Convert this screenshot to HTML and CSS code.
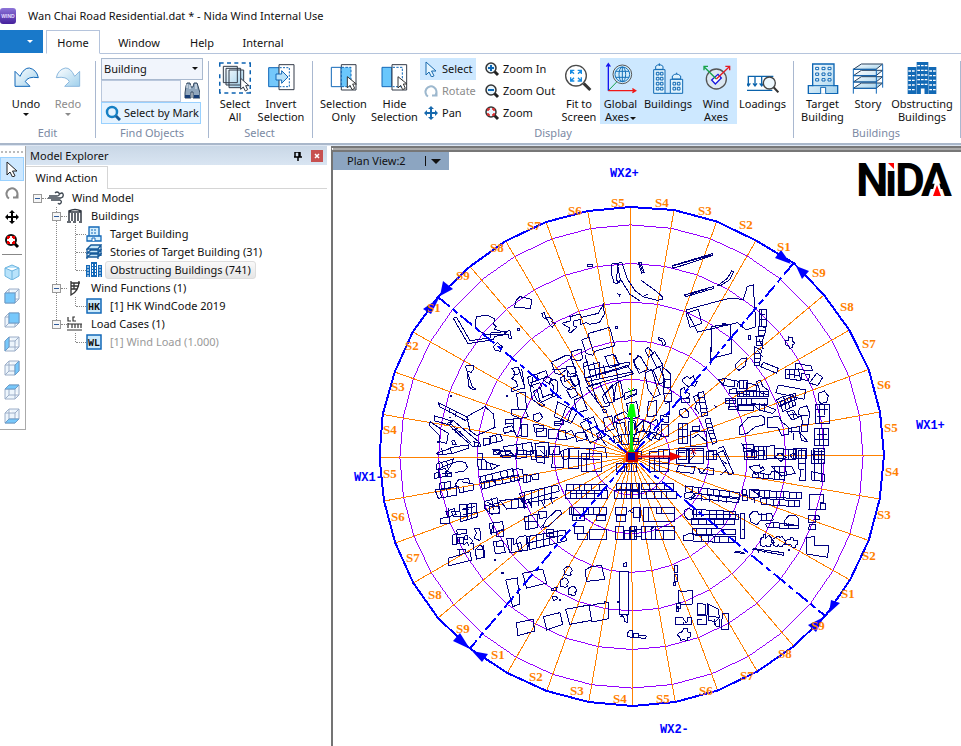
FILE: index.html
```html
<!DOCTYPE html>
<html lang="en">
<head>
<meta charset="utf-8">
<title>Nida Wind</title>
<link rel="stylesheet" href="styles.css">
</head>
<body>
<svg class="defs" aria-hidden="true">
  <defs>
    <linearGradient id="sky" x1="0" y1="0" x2="1" y2="1"><stop offset="0" stop-color="#fff"/><stop offset="1" stop-color="#9fd0ec"/></linearGradient>
    <linearGradient id="purple" x1="0" y1="0" x2="0" y2="1"><stop offset="0" stop-color="#8d74d8"/><stop offset="1" stop-color="#45209c"/></linearGradient>
    <symbol id="cursor" viewBox="0 0 16 16"><path d="M3 1v13l3-3 2.500 5 2.500-1.200-2.500-4.800h4.500z"/></symbol>
    <symbol id="rotate" viewBox="0 0 16 16"><path d="M5 13.500A5.500 5.500 0 1 1 12.500 12M9 12.500h4.500V8.500" fill="none" stroke-width="2"/></symbol>
    <symbol id="pan" viewBox="0 0 16 16"><path d="M7 4h2v3h3V5l3 3-3 3V9H9v3h2l-3 3-3-3h2V9H4v2L1 8l3-3v2h3V4H5l3-3 3 3z"/></symbol>
    <symbol id="lens" viewBox="0 0 16 16"><path d="M10 10l4 4" stroke="#222" stroke-width="3"/><circle cx="7" cy="7" r="5" fill="#e8f5fc" stroke="#333" stroke-width="1.500"/></symbol>
    <symbol id="cube" viewBox="0 0 16 16"><path class="cube-line" d="M1 5l4-4h10v10l-4 4H1zM1 5h10v10M11 5l4-4M5 1v10h10M5 11l-4 4"/></symbol>
  </defs>
</svg>

<header class="titlebar">
  <svg class="app-icon" viewBox="0 0 16 16"><rect width="16" height="16" rx="3" fill="url(#purple)"/><text x="8" y="10">WIND</text></svg>
  <h1>Wan Chai Road Residential.dat * - Nida Wind Internal Use</h1>
</header>

<nav class="tabs">
  <button class="file" aria-label="File menu"><i class="caret light"></i></button>
  <button class="tab active">Home</button>
  <button class="tab window">Window</button>
  <button class="tab help">Help</button>
  <button class="tab internal">Internal</button>
  <span class="rest"></span>
</nav>

<section class="ribbon">
  <div class="group edit">
    <div class="tools">
      <button class="big w42"><svg viewBox="32 186 96 96"><path d="M47 214v45h45l-14-14q7-17 39-12-5-24-27-29-16-1-28 25z" fill="url(#sky)" stroke="#1268b8" stroke-width="3"/></svg><span>Undo</span><i class="caret"></i></button>
      <button class="big w42 off"><svg viewBox="158 186 96 96"><path d="M241 214v45h-45l14-14q-7-17-39-12 5-24 27-29 16-1 28 25z" fill="url(#sky)" stroke="#8db9de" stroke-width="3"/></svg><span>Redo</span><i class="caret"></i></button>
    </div>
    <h2>Edit</h2>
  </div>
  <div class="group find">
    <div class="tools stack">
      <div class="combo"><select aria-label="Object type"><option>Building</option></select><i class="caret"></i></div>
      <div class="search"><input type="text" aria-label="Object number"><button aria-label="Find"><svg width="16" height="18" viewBox="0 0 16 18"><path d="M2 4l1-3h3l1 4h2l1-4h3l1 3 2 7v5H9v-6H7v6H1v-5z" fill="#91a7bd" stroke="#31465f"/><path d="M3 2v4M6 3v4M12 2v5" stroke="#eef5fb"/><path d="M1 13h5v3H1zM10 13h5v3h-5z" fill="#173d76"/></svg></button></div>
      <button class="mark"><svg width="16" height="16" viewBox="0 0 16 16"><circle cx="7" cy="7" r="5" fill="none" stroke="#1680c4" stroke-width="2.500"/><path d="M11 11l4 4" stroke="#155c99" stroke-width="3"/></svg>Select by Mark</button>
    </div>
    <h2>Find Objects</h2>
  </div>
  <div class="group choose">
    <div class="tools">
      <button class="big w46"><svg viewBox="657 183 96 96"><path d="M659 197v-11h12m10 0h12m10 0h12m10 0h12m10 0h4v12m0 10v12m0 10v12m0 10v12m0 8v4h-12m-10 0h-12m-10 0h-12m-10 0h-12m-10 0h-4v-12m0-10v-12m0-10v-12" fill="none" stroke="#0c63b3" stroke-width="5"/><g fill="url(#sky)" stroke="#333b49" stroke-width="3"><path d="M670 196h42v49h-42zM678 202h44v50h-44zM687 207h44v53h-44z"/><path fill="#fff" d="M722 232v33l8-7 6 12 7-4-6-12h10z"/></g></svg><span>Select<br>All</span></button>
      <button class="big w46"><svg viewBox="794 186 96 96"><path d="M805 203h32v57h-32z" fill="#74c8fb" stroke="#1268b8" stroke-width="3"/><path d="M836 194h45v75h-45z" fill="#fff" stroke="#333b49" stroke-width="3"/><path d="M838 203h29v57h-29" fill="none" stroke="#1268b8" stroke-width="3" stroke-dasharray="6 4"/><path d="M827 222h17v-10l19 19-19 19v-10h-17z" fill="#b8e2fa" stroke="#1268b8" stroke-width="3"/></svg><span>Invert<br>Selection</span></button>
    </div>
    <h2>Select</h2>
  </div>
  <div class="group display">
    <div class="tools">
      <button class="big w50"><svg viewBox="52 36 96 96"><path d="M62 52h29v58H62z" fill="#fff" stroke="#1268b8" stroke-width="3"/><path d="M92 44h44v76H92z" fill="#fff" stroke="#333b49" stroke-width="3"/><path d="M92 52h29v58H92z" fill="#6ac7fc" stroke="#1268b8" stroke-width="3" stroke-dasharray="8 4"/><path d="M110 80v34l8-8 6 13 8-4-6-13h11z" fill="#fff" stroke="#333" stroke-width="3"/></svg><span>Selection<br>Only</span></button>
      <button class="big w50"><svg viewBox="206 36 96 96"><path d="M215 52h29v58h-29z" fill="#6ac7fc" stroke="#1268b8" stroke-width="3"/><path d="M245 44h44v76h-44z" fill="#fff" stroke="#333b49" stroke-width="3"/><path d="M247 52h29v58h-29" fill="none" stroke="#1268b8" stroke-width="3" stroke-dasharray="7 4"/><path d="M263 80v34l8-8 6 13 8-4-6-13h11z" fill="#fff" stroke="#333" stroke-width="3"/></svg><span>Hide<br>Selection</span></button>
      <div class="minor">
        <button class="small on"><svg class="blue-cursor"><use href="#cursor"/></svg>Select</button>
        <button class="small off"><svg class="soft-rotate"><use href="#rotate"/></svg>Rotate</button>
        <button class="small"><svg class="blue-pan"><use href="#pan"/></svg>Pan</button>
      </div>
      <div class="minor zooms">
        <button class="small"><svg viewBox="0 0 16 16"><use href="#lens"/><path d="M4 7h6M7 4v6" stroke="#0b66b5" stroke-width="2"/></svg>Zoom In</button>
        <button class="small"><svg viewBox="0 0 16 16"><use href="#lens"/><path d="M4 7h6" stroke="#0b66b5" stroke-width="2"/></svg>Zoom Out</button>
        <button class="small"><svg viewBox="0 0 16 16"><use href="#lens"/><path d="M4 6V4h2m2 0h2v2m0 2v2H8m-2 0H4V8" fill="none" stroke="#d22" stroke-width="1.500"/></svg>Zoom</button>
      </div>
      <button class="big w42"><svg viewBox="761 36 96 96"><path d="M823 100l20 20" stroke="#353535" stroke-width="9"/><circle cx="800" cy="77" r="31" fill="#fff" stroke="#4a4a4a" stroke-width="4"/><path d="M794 71l-9-9m-1 10v-11h11M806 71l9-9m-10-1h11v11M794 83l-9 9m-1-10v11h11M806 83l9 9m-10 1h11V82" fill="none" stroke="#168ce4" stroke-width="4"/></svg><span>Fit to<br>Screen</span></button>
      <button class="big w41 on"><svg viewBox="882 36 96 96"><path d="M892 122l26-27" stroke="#15a34a" stroke-width="3"/><path d="M892 122V42m-6 8l6-9 6 9" fill="none" stroke="#1414f0" stroke-width="4"/><path d="M892 122h80m-8-6l10 6-10 6" fill="none" stroke="#f01818" stroke-width="4"/><circle cx="934" cy="73" r="28" fill="#d3edfc" stroke="#555" stroke-width="3"/><g fill="none" stroke="#1672b9" stroke-width="3"><circle cx="934" cy="73" r="22"/><ellipse cx="934" cy="73" rx="10" ry="22"/><path d="M934 51v44M914 64h40M914 82h40"/></g></svg><span>Global<br>Axes<i class="caret inline"></i></span></button>
      <button class="big w54 on"><svg viewBox="36 30 96 96"><g fill="#dff2fd" stroke="#1069b4" stroke-width="3"><path d="M41 124V53h34v71zM91 124V82h37v42zM47 52v-9q11-10 22 0v9zM97 81v-9q12-12 25 0v9zM58 42v-8M110 67v-5"/><path d="M49 61h8v8h-8zM61 61h8v8h-8zM49 76h8v8h-8zM61 76h8v8h-8zM49 91h8v8h-8zM61 91h8v8h-8zM49 106h8v8h-8zM61 106h8v8h-8zM99 91h8v8h-8zM112 91h8v8h-8zM99 106h8v8h-8zM112 106h8v8h-8zM75 124h16"/></g></svg><span>Buildings</span></button>
      <button class="big w42 on"><svg viewBox="180 36 96 96"><circle cx="229" cy="87" r="30" fill="#dce8f2" stroke="#555" stroke-width="4"/><path d="M215 90l19-17 10 11-18 18z" fill="#fff" stroke="#1717df" stroke-width="4"/><path d="M229 87l-37-37m0 11V49h12" fill="none" stroke="#17a34a" stroke-width="4"/><path d="M229 87l39-37m-12-1h13v12" fill="none" stroke="#e41b23" stroke-width="4"/></svg><span>Wind<br>Axes</span></button>
      <button class="big w50"><svg viewBox="318 36 96 96"><path d="M320 79h77M322 79v26m20-26v26m20-26v26M316 100l6 8 6-8m8 0l6 8 6-8m8 0l6 8 6-8M318 121h76" fill="none" stroke="#0b63ac" stroke-width="4"/><path d="M397 111l15 16" stroke="#333" stroke-width="6"/><circle cx="385" cy="99" r="18" fill="#eef8fe" stroke="#444" stroke-width="4"/></svg><span>Loadings</span></button>
    </div>
    <h2>Display</h2>
  </div>
  <div class="group built">
    <div class="tools">
      <button class="big w50"><svg viewBox="498 33 96 96"><path d="M502 128v-24h13V39h64v65h11v24z" fill="url(#sky)" stroke="#0d66b4" stroke-width="4"/><path d="M514 104h65" stroke="#0d66b4" stroke-width="3"/><path d="M524 49h9v7h-9zM543 49h9v7h-9zM561 49h9v7h-9zM524 66h9v7h-9zM543 66h9v7h-9zM561 66h9v7h-9zM524 83h9v7h-9zM543 83h9v7h-9zM561 83h9v7h-9zM539 128v-19h15v19" fill="#fff" stroke="#0d66b4" stroke-width="3"/></svg><span>Target<br>Building</span></button>
      <button class="big w40"><svg viewBox="632 33 96 96"><g fill="url(#sky)" stroke="#27405d" stroke-width="3"><path d="M636 112l24-16h64l-20 16zM636 93l24-16h64l-20 16zM636 74l24-16h64l-20 16z"/><path d="M636 55l24-16h64l-20 16z"/></g><path d="M636 53v75M705 55v73M724 40v70M636 55h69M636 74h69M636 93h69M636 112h69" stroke="#1268b8" stroke-width="3"/></svg><span>Story</span></button>
      <button class="big w68"><svg viewBox="794 33 96 96"><path fill="#1269b5" d="M826 33h35v96h-35zM799 48h26v81h-26zM862 48h23v81h-23z"/><path d="M828 44h31M828 58h31M828 72h31M828 86h31M828 100h31M801 60h22M801 74h22M801 88h22M801 102h22M801 116h22M864 60h20M864 74h20M864 88h20M864 102h20M864 116h20" stroke="#fff" stroke-width="4" stroke-dasharray="8 3"/><path d="M837 129v-18h14v18" fill="#fff" stroke="#1269b5" stroke-width="3"/></svg><span>Obstructing<br>Buildings</span></button>
    </div>
    <h2>Buildings</h2>
  </div>
</section>

<main class="workspace">
  <aside class="sidebar" aria-label="View tools">
    <span class="grip"></span>
    <button class="on" aria-label="Select"><svg class="dark-cursor"><use href="#cursor"/></svg></button>
    <button aria-label="Rotate"><svg class="gray-rotate"><use href="#rotate"/></svg></button>
    <button aria-label="Pan"><svg><use href="#pan"/></svg></button>
    <button aria-label="Zoom"><svg viewBox="0 0 16 16"><path d="M10 10l4 4" stroke="#000" stroke-width="3"/><circle cx="7" cy="7" r="5" fill="#fff" stroke="#111" stroke-width="2"/><path d="M4 6V4h2m2 0h2v2m0 2v2H8m-2 0H4V8" fill="none" stroke="#e00" stroke-width="2"/></svg></button>
    <hr>
    <button aria-label="Isometric"><svg viewBox="0 0 16 16"><path d="M8 1l7 3v8l-7 4-7-4V4zM1 4l7 3 7-3M8 7v9" fill="#b8e3fb" stroke="#6db4df"/></svg></button>
    <button aria-label="Front"><svg viewBox="0 0 16 16"><use href="#cube"/><path fill="#77c8fb" stroke="#6d9cc8" d="M1 5h10v10H1z"/></svg></button>
    <button aria-label="Back"><svg viewBox="0 0 16 16"><use href="#cube"/><path fill="#77c8fb" stroke="#6d9cc8" d="M5 1h10v10H5z"/></svg></button>
    <button aria-label="Left"><svg viewBox="0 0 16 16"><use href="#cube"/><path fill="#77c8fb" stroke="#6d9cc8" d="M1 5l4-4v10l-4 4z"/></svg></button>
    <button aria-label="Right"><svg viewBox="0 0 16 16"><use href="#cube"/><path fill="#77c8fb" stroke="#6d9cc8" d="M11 5l4-4v10l-4 4z"/></svg></button>
    <button aria-label="Top"><svg viewBox="0 0 16 16"><use href="#cube"/><path fill="#77c8fb" stroke="#6d9cc8" d="M1 5l4-4h10l-4 4z"/></svg></button>
    <button aria-label="Bottom"><svg viewBox="0 0 16 16"><use href="#cube"/><path fill="#77c8fb" stroke="#6d9cc8" d="M1 15l4-4h10l-4 4z"/></svg></button>
  </aside>

  <section class="explorer">
    <header><h2>Model Explorer</h2>
      <button class="pin" aria-label="Pin"><svg width="8" height="9" viewBox="0 0 8 9"><path d="M1 5V0h5v5M0 5h8M4 5v4M5 0v5" fill="none" stroke="#000" stroke-width="1.500"/></svg></button>
      <button class="close" aria-label="Close"><svg width="6" height="6" viewBox="0 0 6 6"><path d="M1 1l4 4M5 1L1 5" stroke="#fff" stroke-width="1.500"/></svg></button>
    </header>
    <div class="subtabs"><button>Wind Action</button><span></span></div>
    <ul class="tree">
      <li><div class="row"><i class="minus"></i><i class="stub"></i><svg viewBox="0 0 16 16"><path d="M1 6h8q3 0 2-3-2-2-4 0M0 8h13q3-1 2-4-1-2-3 0M3 10h9q2 1 1 3-2 2-3 0" fill="none" stroke="#3d4650" stroke-width="1.300"/></svg><span>Wind Model</span></div>
        <ul class="mid">
          <li><div class="row"><i class="minus"></i><i class="stub"></i><svg viewBox="0 0 16 16"><path d="M2 13V3q6-3 12 0v10M5 13V5M8 13V5M11 13V5M2 4h12M0 14h4M6 14h3m3 0h3" fill="none" stroke="#303741" stroke-width="1.500"/></svg><span>Buildings</span></div>
            <ul>
              <li><div class="row leaf"><i class="stub"></i><svg viewBox="0 0 16 16"><path d="M3 10V1h10v9M1 10h14v5H1z" fill="#d5effd" stroke="#1268b8" stroke-width="1.300"/><path d="M5 4h6M5 7h6" stroke="#1268b8" stroke-dasharray="2 1"/><path d="M6 15v-3h3v3" fill="#fff" stroke="#1268b8"/></svg><span>Target Building</span></div></li>
              <li><div class="row leaf"><i class="stub"></i><svg viewBox="0 0 16 16"><path d="M1 5l4-4h10l-3 4zM1 9l4-3h10l-3 3zM1 13l4-3h10l-3 3zM1 5v10M12 5v10M15 1v11" fill="#c7e7f8" stroke="#175b9b" stroke-width="1.300"/></svg><span>Stories of Target Building (31)</span></div></li>
              <li><div class="row leaf"><i class="stub"></i><svg viewBox="0 0 16 16"><path fill="#1268b8" d="M5 0h6v15H5zM0 3h4v12H0zM12 3h4v12h-4z"/><path d="M6.500 2v12m3-12v12M2 4v11m12-11v11" stroke="#fff" stroke-dasharray="2 1"/></svg><span class="selected">Obstructing Buildings (741)</span></div></li>
            </ul></li>
          <li><div class="row"><i class="minus"></i><i class="stub"></i><svg viewBox="0 0 16 16"><path d="M4 1v14q8-4 8-14M4 3h9M4 6h8M4 9h6M4 3h3v6" fill="none" stroke="#333" stroke-width="1.300"/></svg><span>Wind Functions (1)</span></div>
            <ul><li><div class="row leaf"><i class="stub"></i><svg viewBox="0 0 16 16"><path d="M1 1h14v14H1z" fill="#cdeafb" stroke="#1268b8" stroke-width="1.500"/><text x="8" y="12">HK</text></svg><span>[1] HK WindCode 2019</span></div></li></ul></li>
          <li><div class="row"><i class="minus"></i><i class="stub"></i><svg viewBox="0 0 16 16"><path d="M1 1v4h3M8 1H6v4h3M1 7v5m4-4v4m3-4v4m3-4v4m3-4v4M1 8h14M0 14h15" fill="none" stroke="#333" stroke-width="1.200"/></svg><span>Load Cases (1)</span></div>
            <ul><li><div class="row leaf faded"><i class="stub"></i><svg viewBox="0 0 16 16"><path d="M1 1h14v14H1z" fill="#cdeafb" stroke="#1268b8" stroke-width="1.500"/><text x="8" y="12">WL</text></svg><span>[1] Wind Load (1.000)</span></div></li></ul></li>
        </ul></li>
    </ul>
  </section>

  <section class="view">
    <button class="view-tab">Plan View:2 <b></b><i class="caret wide"></i></button>
    <svg class="plan" viewBox="333 152 628 594" preserveAspectRatio="xMidYMin meet" role="img" aria-label="Wind sectors around the target building">
      <defs><polygon id="ring" points="0,-1000 174,-985 342,-940 500,-866 643,-766 766,-643 866,-500 940,-342 985,-174 1000,0 985,174 940,342 866,500 766,643 643,766 500,866 342,940 174,985 0,1000 -174,985 -342,940 -500,866 -643,766 -766,643 -866,500 -940,342 -985,174 -1000,0 -985,-174 -940,-342 -866,-500 -766,-643 -643,-766 -500,-866 -342,-940 -174,-985"/></defs>
      <g class="rings" transform="translate(631.500 456.500) rotate(-.2)">
        <use href="#ring" transform="scale(.0386)"/><use href="#ring" transform="scale(.0772)"/><use href="#ring" transform="scale(.1158)"/><use href="#ring" transform="scale(.1544)"/><use href="#ring" transform="scale(.193)"/><use href="#ring" transform="scale(.2316)"/>
      </g>
      <path class="spokes" d="M630.500 207.500L632.500 705.500M587.700 211L675.300 702M546 222L717.700 690.500M505.700 241L757.300 671.500M470 266.500L793.700 646.300M413 332L850 580M394.700 372L868.700 540.500M382.700 414.500L879.700 499M379 457.500L884 455.500M384 501L880 412M395.300 543L868.700 369.500M413.300 583L849.300 330M438 618L824 295M507.300 673L756 240.500M546.700 691L716.700 221.500M588.700 702L674 210"/>
      <g class="buildings">
        <!-- north west -->
        <g transform="translate(370 300) scale(.33333)">
          <path d="M433 22l5-20 12-12 35 8-3 27zM250 55l10-3 40 70 60-8 3-15h12l45-7 5 25-8-2-3-12-40 6-5 10-75 12zM315 70l5-20 30-5 25 12-5 15 8 8-5 8 35 10-5 5-55 2-28-18zM370 140l12-12 15 12-5 14-17-4zM443 87h5v4h-5zM737 81h5v4h-5zM515 40l8-2 5 15h12l8 5-3 8 10 5-8 10-5-3-10-20-12-5zM577 70l25-8-2-12 30-8 5 10 50-12 15-27 3 30-15 25-30 5-10-5-15 5-2-15-20 5v15l10 3-20 18-5-3 3-12-10-5zM635 120l22-8v-12l62-18 15 55-60 17-5 12-20-5zM657 112l12 40M605 155l28-8 5 28-10 8-22-5zM545 187l45-22 10 3 20 50-20 5-10-15-20 15-15-3zM287 198l22-3 3 10-8 12-15-5zM292 217l10 28 5 17 10 5-8 3-12-10-5-40zM242 287h4v4h-4zM410 286h3v4h-3zM779 160h3v4h-3z"/>
          <path d="M425 205l20-3 20 62-15 3-25 8v-10l18-6-5-15-12-8 10-12-5-12zM430 225l18-4M455 207l8 50M473 232l55-20 5 18-50 18 5 12-10-4zM500 223l6 15M488 230v15M480 258l30-10 5 12-25 15 10 25 25 15-10 5-28-22zM502 268l10-4 6 28 25-10 5 8-30 15-10-5zM540 245l12-8 12 8v25l-10 20-8-3 5-28zM563 305l60 30-20 35-50-20zM590 318l-15 40M605 327l-12 38M570 235l15-10v20l15-8 10 20-15 10-15-10zM600 232l20-8 10 25-15 10zM590 270l25-5 8 20-20 10zM612 300l25-10 15 40-30 8zM590 200h25l3 30h-25zM545 210l45-5M520 240l8-12 16 8-6 16zM560 292l14-6"/>
          <path d="M640 190l12-4 5 25 120-25 3 8-135 40zM645 235l130-35 15 22-135 35zM650 245l140-30M670 185l10 50M690 185v48M705 170l25-7 18 32-30 8zM735 165l12 30M640 200l50-13M650 262l40-12 25 55 5 12-25 5zM697 290l30-35 8 50-30 5zM697 290l43-43M740 248l12-3 8 45-30 12zM740 210l5 40M700 195l6 30M805 165l-15 20 8 20 12 3M762 280l38-12v15l-35 15zM770 290l30-10M770 310l30-5 8 45-30 10zM733 350l30-15 15 12-30 15zM733 350v16l20 5M700 355l25-8 8 40-25 8zM738 372l25-5 5 35-22 4zM775 365l20-3 5 40-22 3zM697 330l10-2 4 8-10 2zM645 165l12 42 15 70 10 30M620 225l20 72 10 30"/>
          <path d="M205 308l10 5 45 22 30 15 5 8-10 3-45-25-30-15zM240 325l-3 14M260 334l-5 16M290 350l55-30 25 22 5 40-55 25-20-15zM180 365l30 20 25 15-5 30-20-5-3-20-30-30zM195 348l50 15-5 12-45-12zM232 370l18-8 78 65-5 12h-15l-35-30zM240 370l65 60M245 390l20-5M256 399l18-6M200 460l55-20 40-5v10l-45 15-48 5zM215 445l5 20M240 440l5 20M204 424h4v4h-4zM245 423l8-2 5 12-9 2zM238 353h6"/>
          <path d="M360 410l30-8 8 20-35 8zM340 415h20v18l-20 3zM377 405l3 20M312 425l18 6 2 8-18-1zM405 360l25-3 2 12-25 3zM425 330h40l10 20-25 5-25-10zM440 280l25-3 5 50-25 3zM490 345l20-7 8 15-15 12-12-5zM400 385l25-8 8 15-30 8zM430 355h20l5 50-15 5-10-20zM455 375h18v35h-18zM490 372l30 5v15l-25 5zM500 385h30v25h-30zM535 390h30v25h-30zM565 395l20-5 5 30h-25zM585 400l20-10 10 20-25 8zM555 365l25-3v12l-25 3zM555 370h20M630 370l40-20 25 60-35 20zM640 395l35-15M655 415l-20-35M655 365l15 50M370 450h20v15h-20zM390 455l30-5 5 10-30 8zM400 440l85-13 3 35-80 5zM440 434l4 30M458 431l2 33M495 430l40-3 2 45h-40zM500 440h25v30M540 440h30v25h-30zM570 455l25-10 5 30-20 5zM600 445h60v32h-60zM655 445l50-2 6 30M615 400l30-4 5 22-30 6zM680 402l18-10 8 15-20 12zM690 412l20 26M705 400l20 15M730 410l15-3 6 18-16 5zM755 405h20v30h-20zM785 415h20v20h-20zM640 360l18-8M420 390l18 8M470 455h20v8"/>
        </g>
        <!-- north -->
        <g transform="translate(330 145) scale(.33333)">
          <path d="M772 360h16v4h-16zM845 357l31-4 15 47 25 38 25 18 40 10 15-2 2-8-20-18-45-32M862 354l8 46 30 48 30 20M845 357l-1 30 8 25 8 5 12-12M865 355l-6 50 10 8M862 446l8 3-2 6M925 352h8l9 30-7 2zM928 355l10 24M937 455l18-8"/>
        </g>
        <g transform="translate(640 145) scale(.33333)">
          <path d="M97 362l120-36v6l-117 38zM105 361l110-31M133 450l89-26v6l-84 25zM150 448l50-16M233 422l29-22 13-22 6 2-13 25-28 18zM138 495l65-18 65-17 42 3 12-39 18-4 2 35 6 90-30 10-25-22-120 28z"/>
        </g>
        <!-- north east -->
        <g transform="translate(630 300) scale(.33333)">
          <path d="M168 40l37-12 10 42-35 12zM245 80l55-8 6 88-61 15-5 20 5-65zM255 75l20 2 2-6 22 2M245 110l-5 80M85 112l15 5 8 15-8 5-5-15-10-3zM355 108h7v10h-7zM10 180l20-12 25 40-28 12zM45 150l10-8 15 18-14 12zM62 165l12-10 25 40-18 8zM45 220l20-12 15 50 10 25-18 10-18-25zM70 210l18-10 18 45-18 8zM98 200l22 20 5 85h-22zM100 240h22M100 262h23M102 282h22M105 265l-5-30M55 305l25-3v45l-28 3zM20 380l20-20 20 10 20-12 8 25-10 15-55-5zM40 360v30M62 370l-3 25M92 347l25 3v18l-25-3zM105 310l15-2v35h-18M0 360l15 12-2 18M15 402l28-12 10 14-25 22h-20zM60 395l14 10-10 15-14-8zM80 400l12 5-5 15-12-5zM95 375h22v35H95z"/>
          <path d="M318 192l14-15 17-3-2 22-20 15-10-8zM156 240l15-12 8 8 12-8 2 12 8 5-6 14-12-4-6 7-15-12zM150 270l12-8 5 15 12 4-3 12-22 3zM155 295h25v14h-25zM150 330l15-5 12 12-3 14-15 2-12-12zM190 290l12-5 8 20-12 4zM205 278l16-3 12 70-18 5zM207 292h18M210 308h18M213 325h20M216 338h18M200 310l-5 15 12 15M253 317l5 2-3 3M225 358l15-4 10 36-16 4zM234 394l15-4 12 36-13 6zM228 370h16M232 383h16M237 402h17M241 415h18M145 370h27v60h-27zM145 388h27M145 410h27M158 370v60M187 380l22-2v15h-22zM182 395h48v45h-48zM185 415l20-12 22 20"/>
          <path d="M390 30h20l-2 18 2 32h-20zM388 45h18M388 60h20M395 30v50M385 78l22 5-3 25-18-2zM383 92h22M378 110l22-2-3 28h-18zM378 125h20M374 140l20 10-6 48h-14zM376 160h14M376 175h14M376 188h12M388 118l12 30M382 150l15 20M466 123l10-2v-10l12 2v10l6 7-6 5v8l-10 2-2-8-8-2zM400 187l45 18-5 15-48-20zM498 190l45 8 5 15-50-5zM465 210l40-3 7 35-45-7zM470 222l38 5M480 210v24M495 208v26M515 220l25 5-5 17-20-4zM560 220l18 12-15 25-25-8zM445 255l82 15-5 28-85-20zM460 290l35-10 5 18-32 12zM480 283l3 22M565 280l18-7 12 15-5 18-18 5-8-14zM558 315h42v57h-42zM558 330h35M560 350h25M570 315v57M585 315v30M555 385h40v52h-40zM560 405h32M570 385v52M555 418h38M580 385v50M508 325l22-8 8 20-2 37-18-2-4-25-10-5zM505 350l28-5"/>
          <path d="M265 240l18-5 32 8-3 18-30-4zM283 235l-2 22M315 240l10 5-3 15M328 240l25 2v25h-25zM340 241v25M350 248l30 8v15h-32zM380 245l10-5 8 18 18 14-2 12-22-5zM298 268l22-3v15h-22zM320 265v16l40 2M322 275h95v15h-95zM330 275v14M340 275v14M350 275v14M360 275v14M370 275v14M380 275v14M390 275v14M400 275v14M288 295h30v15h-30zM288 302h30M298 295v30M295 320h30v8h-30zM322 297h90v18h-90zM335 297v18M350 297v18M365 297v18M322 316h50v15h-50zM365 310l45 8 28 12-10 10-40-10zM390 308v23M405 310v25M440 300l18-10 10 20-18 10zM450 305l40-18 8 28-40 20zM462 300l6 26M472 295l8 30M482 290l8 30M452 315l38-15M470 335l20-4 15 22-20 6zM480 345h22M488 335l5 24"/>
          <path d="M330 380l25-28 40-5 10 8v18l-30 8-25 20-22 3zM412 352l35-2 8 15 22 18v20l-22 3-10-22-33-2zM478 385l30-5v15h-30M485 380v20M490 400v20M515 375h18v20h-18zM508 395l25 30-18-3zM335 430l10 15 25 3-2 20M340 435h30v20h-30zM345 455h40v25h-40zM375 440h35v38h-35zM385 440v38M400 440v38M410 440l25-5v40h-25zM435 445h25v30h-25zM440 460h20M462 450h35v30h-35zM475 450v30M490 445h40v30h-40zM500 445v30M515 445v30M550 445h35v35h-35zM552 455h33M565 445v35M265 445l15-5 18 40M230 455h20v25h-20zM245 465h18M145 445h25v35h-25zM145 458h20M170 450l15-5 8 22-14 13M172 445h50v35M60 455h25v20H60zM85 450h35v25H85zM100 450v25M20 455h15v20H20z"/>
        </g>
        <!-- south west -->
        <g transform="translate(370 450) scale(.33333)">
          <path d="M200 42l50-15-4 12-45 20zM215 38l5 20M230 33l3 20M198 45l12-12M195 70l12-3 3 15-15 3zM205 60l22-5 5 22-25 6zM228 65l18 2v14h-18zM215 72h30M232 62l15-22 20-7 20 5 5 14-10 12-28 3M322 30l20-3 8 10 35 10-20 12-40-2zM335 28v28M350 38l-2 20M362 42l2 15M325 12h12v15M330 80l98-24 4 20-98 22zM345 76l5 22M365 70l5 25M390 65l5 22M410 60l5 22M332 98l40-10 5 18-40 12zM345 95v22M360 90v20M375 90l70-15 5 15-72 15zM395 85l4 16M420 80l4 15M428 60l12-4 18 3 2 25-25 8zM460 72l22 5v18l-22 3zM470 72v24M485 75l22-5v18h-20z"/>
          <path d="M207 100l35-6v20l-32 6zM225 95v20M195 120l65-10v25l-55 10zM210 118l5 26M230 115l3 24M265 90l30-5 5 15 10 2v18l-40 8-5-18-10-5zM280 110v18M275 95l25 5M343 155l38-12 8 45-25 5-20-18zM350 155l30 15M345 168l45-10M360 170h30v22h-30zM365 145l5 35M390 152l70-8v28l-50 5zM405 150h40M425 148v28M445 146v26M448 130l115-25 5 18-110 30zM465 128v50M485 122v52M505 118v50M525 114v48M545 110v45M465 160l100-18M450 145l20 30M475 150l12 25M512 150l14 24M540 140l8 22"/>
          <path d="M213 205l25-5v22h-25zM228 185l25-10 5 18-25 8zM235 175v25M245 185h25v-20h20v35h-40zM268 165l50-5 5 40-50 15zM280 175l35-5M280 195l40-8M293 165v42M305 162v42M275 180h22M260 200h22M463 200l40-8v40l-35 8zM475 198v40M465 215h35M505 185l25-2v18l-20 5zM528 210l30-28h14l2 10-40 38-15 2 5-15zM520 225l-10 8M357 220l40-5 5 25-40 10zM370 215v35M380 245l22-8v22h-22zM368 225l-5 30"/>
          <path d="M248 255l12-5v35h-12zM260 240l30-3v12l-28 5zM262 262h18v18h-18zM285 258l8-2v12h-8zM270 265v18M298 262l10 10-5 8M312 235h15l6 15-3 22-18-8 8-15zM370 275l28-3 8 35-30 5zM380 275v15h20M410 265h22v18l20-5 5 25-38 5zM425 265v38M438 270l10-10 20-3 5 45h-25zM470 260l115-20 4 32-110 27zM480 262v35M500 255v38M522 250v38M540 245v38M562 240v38M530 240h20v20h-20zM535 250h15M470 280l110-25M315 300l15-15 8 5 4 32-22 5zM320 300h20M235 325l65-20 5 25-68 17zM280 285l12-8 5 12M262 300l25-3v10M268 300v18M300 282h10v18M340 285l5 38"/>
          <path d="M375 330h3v2h-3zM395 367h6v4h-6zM458 370l60-13 12 42-60 15zM407 390l35-6 8 78-22 8zM545 415l16-2-3 10-14-3zM548 440l10-2 5 8-13 6zM568 450h3v3h-3zM645 360l18-10 32-4 9 42-54 6zM762 340l8-2v12h-8zM742 455h3v3h-3z"/>
          <path d="M588 352l7-4 7 4 5 10-6 6 3 6-10 4-4-5-8 2 2-9-3-8zM577 387l7-4 7 4 5 10-6 6 3 6-10 4-4-5-8 2 2-9-3-8zM601 412l7-4 7 4 5 10-6 6 3 6-10 4-4-5-8 2 2-9-3-8z"/>
          <path d="M370 0l50 5 15 15-35 3zM385 5l8 16M440 0l30 2v20l-32 4zM480 0h20v30h-15zM500 15l25 5v20l-25-4zM510 0l20 20v-20M550 0l-5 52h35V0M595 0v56h30V0M635 10h60v55h-60zM650 10v55M640 30h50M740 40h25v25h-25zM770 40h30v25h-30zM785 40v25M590 103h120v18H590zM610 103v18M628 103v18M645 103v18M665 103v18M690 103v18M588 123h125v22H588zM602 123v22M620 123v22M635 123v22M650 123v22M675 123v22M695 123v22M602 132h90M740 100h70v18h-70zM755 100v45M770 100v45M787 100v45M735 123h75v22h-75zM600 172h110v22H600zM612 172v22M640 172v22M655 172v22M672 172v22M690 172v22M608 198h35v15h-35zM620 200v14M680 198h28v15h-28zM738 173h32v22h-32zM775 185l18-12h17v42M740 198h28v16h-28zM615 230h25v20h-25zM622 250h30v20h-30zM660 238h50v32h-50zM737 230h25v40h-25zM765 242h35v28h-35zM778 230v40M782 230h18v16h-18zM605 172v20"/>
        </g>
        <!-- south east -->
        <g transform="translate(630 450) scale(.33333)">
          <path d="M60 20h55v45H60zM75 20v45M90 20v45M60 40h55M140 0h35v40h-35zM180 0h40v40h-40zM145 47l50 3-5 20-50-5zM205 55l10 15 15-18 20 4v18l-40-5zM235 0h25v30h-25zM262 10l18-8 30 68-12 5zM275 30l15 12M272 75l18-15M0 100h25v18H0zM35 100h95v18H35zM60 100v18M80 100v18M105 100v18M0 125h25v20H0zM35 125h105v20H35zM50 125v20M75 125v20M95 125v20M110 125v20M10 173h22v30H10zM40 173h95v42H40zM55 173v42M80 173v18h55M95 173v18M0 185l10 5M0 230h15v38H0zM15 240h20v20H15zM35 230h100v38H35zM48 230v38M65 230v38M78 242h56M78 230v38M100 242v26M60 240l15-12"/>
          <path d="M168 108l160 20v20l-160-22zM187 110v20M205 112v20M232 115v22M250 118v20M268 120v22M298 125v20M165 130l20-5 10 12-12 12-18-5zM195 130l130 13v15l-145-15zM215 132v20M240 135v20M265 137v20M290 140v18M165 180l10-5 12 5v15h140v15H190l-18-3-10-12zM190 178l128 7v22H190zM200 180v20M215 180v22M240 182v22M260 183v22M280 184v22M300 185v22M185 205h130v20H185zM205 205v20M230 205v20M255 205v20M280 205v20M187 235l130 3v17l-130-2zM200 235v18M230 236v18M245 236v18M280 237v18M160 258l20-8 20 6 118 5v18l-118-5-40-4zM215 257v20M235 257v20M255 258v20M270 258v20M295 258v20M190 250v20M337 118l12 2v15h-12zM337 135l15 2v15h-15zM358 118l30 2-3 22h-25zM332 190h12v75h-12zM335 240h8M318 305h12l15 5-30-2zM370 298l90 18v-8l-88-12zM385 300v8M405 302v8M425 305v8"/>
          <path d="M358 50l30-5 5 12 5-8 5 10-25 15zM370 65l50 10 5-10 38 3v22l-95-8zM385 65v20M400 70v18M415 72v16M435 65v22M450 66v22M425 50h60l10 20-40 8zM435 50v20M450 50v20M465 50l5 24M350 0h30v22h-30zM365 0v22M385 0h20v18h-20zM410 0v28h-15M435 20l15-10 18 12-15 12zM480 15l12-5 8 12-10 8zM505 0h22v93h-18l3-30-7-8zM508 25h18M508 40h18M508 60h15M545 65l40 8v22l-40-5zM545 0v40h40V0M555 0v90M565 0v40M545 15h40M550 30h36M575 0v95M362 148l12-2v12M365 120l150 8v18l-120-5zM390 120v20M405 122v20M420 122v22M440 125v22M460 125v22M480 125v22M500 125v22M390 145l120 8v18l-115-8zM410 145v18M430 148v18M450 150v18M475 152v18M495 152v18"/>
          <path d="M358 195l10-10h15l2 10 40-5 5 20-40 3-10 12-18-10zM395 190v22M410 190v22M465 210l10-12 22-2 10 12v20h-42zM407 222l25-5 75 10v10l-95-5zM430 215v18M450 218v18M475 220v18M540 133h42v25h-10v20h-35zM570 160h15l3 20h-15zM537 197l20-2v22h-20zM552 210h18v-10l-12-5M538 225h18v15h-20zM530 262l24-2v28h42l-3 34-62-10zM475 298h3v5h-3z"/>
          <path d="M392 265l8-3v-8h8v10l8-8 8 8v8h7v8l-10 5v6h-10l-3-6-6 5-10-4v-10zM432 265l8-3v-3h8v5l8-4 7 8v4h4v8l-8 5v6h-10l-3-6-6 5-10-4 2-8h-8v-6zM470 270l10-1 2-7 10 3v6l12 2v8l-8 5v6h-10l-4-8h-14v-10z"/>
          <path d="M135 348h7v20h-7zM133 373h9v22h-9zM130 398h8v8h-8zM145 422l12 2 30-2v40l-20 3-22-5zM140 460l12-2v18h-10z"/>
        </g>
        <!-- south -->
        <g transform="translate(430 560) scale(.33333)">
          <path d="M259 188l50-10 5 35-50 14zM340 170l50-12 8 35-48 17zM407 148l70-13 8 46-66 12zM477 138l25-6 22-2v-5l12 3v48l-50 10zM562 124h4v4h-4zM570 35h25v128h-27zM572 170l10-7 12 5-2 20-7-3-4-15zM594 230l-2-10 6-8h10v20zM612 220h15v12h-15zM627 225l22 3-2 8-20-3z"/>
        </g>
        <g transform="translate(620 560) scale(.33333)">
          <path d="M168 173h20l10 15 6-5v-10h10v22h-46zM190 195v-10M178 218l10-3 2-8h12l2 10 8 2-2 12-8 3v8l-10-3-10 2-2-8-8-8zM233 130h10l14 5v30h-24zM230 167h30v28h-28v-15h15M265 132l30 15 3 25-33-3zM262 130v34M265 165v15l20 5 12-10 2 25-12-2-2-10M283 178v18M307 160h20v48h-23zM170 140h7v15h-7z"/>
        </g>
      </g>
      <path class="outer" d="M438 297L470 266.500 505.700 241 546 222 587.700 211 630.500 207 674 210 716.700 221.500 756 240.500 793.700 263 824 295 849.300 330 868.700 369.500 880 412 884 455.500 879.700 499 868.700 540.500 850 580 825.300 616 793.700 646.300 757.300 671.500 717.700 690.500 675.300 702 632.700 706 588.700 702 546.700 691 507.300 673 470 648.500 438 618 413.300 583 395.300 543 384 501 379.500 457 382.700 414.500 394.700 372 412.700 332z"/>
      <path class="axes" d="M793.700 263L631.500 456.500 470 648.500M438 297L631.500 456.500 825.300 616"/>
      <path class="heads" d="M781 250l-6 8 16 6zM809 271l-7 8-6-13zM443 281l10 8-13 7zM423 309l8 5 8-16zM460 633l-7 8 17 8zM488 654l-6 8-10-11zM831 600l9 3-11 10zM808 625l8 7 8-15z"/>
      <g class="labels">
        <text x="611" y="207">S5</text><text x="568" y="215">S6</text><text x="527" y="230">S7</text><text x="490" y="252">S8</text><text x="456" y="280">S9</text><text x="427" y="312">S1</text><text x="405" y="350">S2</text><text x="391" y="391">S3</text><text x="383" y="434">S4</text><text x="383" y="478">S5</text><text x="391" y="521">S6</text><text x="406" y="562">S7</text><text x="428" y="599">S8</text><text x="456" y="633">S9</text><text x="491" y="659">S1</text><text x="529" y="681">S2</text><text x="570" y="695">S3</text><text x="613" y="703">S4</text><text x="656" y="703">S5</text><text x="699" y="695">S6</text><text x="740" y="680">S7</text><text x="778" y="658">S8</text><text x="811" y="630">S9</text><text x="841" y="598">S1</text><text x="862" y="560">S2</text><text x="877" y="519">S3</text><text x="885" y="476">S4</text><text x="884" y="432">S5</text><text x="877" y="389">S6</text><text x="862" y="348">S7</text><text x="840" y="311">S8</text><text x="812" y="277">S9</text><text x="777" y="251">S1</text><text x="739" y="229">S2</text><text x="698" y="215">S3</text><text x="655" y="207">S4</text>
      </g>
      <g class="labels axis"><text x="610" y="177">WX2+</text><text x="916" y="429">WX1+</text><text x="354" y="481">WX1-</text><text x="660" y="733">WX2-</text></g>
      <g class="origin">
        <path d="M631.500 450V416" stroke="#00e000" stroke-width="3"/><path d="M627 417h9l-2-13h-4z" fill="#0f0"/><path d="M628 388l3 3 3-3M631 391v4" stroke="#0d0" fill="none"/>
        <path d="M638 456.500h34" stroke="#d00" stroke-width="2"/><path d="M670 452v9l12-4.500z" fill="#e00"/><path d="M691 448l5 6M696 448l-5 6" stroke="#e00"/>
        <path d="M626 452h12v10h-12z" fill="#c00"/><path d="M628 453h7v7h-7z" fill="#0000a8"/><path d="M628 452l4-5 3 5z" fill="#00d000"/>
      </g>
      <g class="brand"><text x="856 885 895 921" y="196">NiDA</text><path fill="#fff" d="M886 160h10v11h-10zM931 197l6-22 6 22z"/><path fill="#f00" d="M888 163h6v6zM933 196l4-11 4 11z"/></g>
    </svg>
  </section>
</main>
</body>
</html>
```
FILE: styles.css
```css
* { box-sizing: border-box; }
body { margin: 0; min-height: 100vh; display: flex; flex-direction: column; background: #fff; color: #111; font: 11px/16px "Noto Sans", "Open Sans", sans-serif; overflow-x: hidden; }
button, input, select { font: inherit; color: inherit; margin: 0; padding: 0; border: 0; background: none; border-radius: 0; }
h1, h2 { margin: 0; font: inherit; }
ul { list-style: none; margin: 0; padding: 0; }
svg { display: block; flex: none; }
.defs { position: absolute; width: 0; height: 0; }
.titlebar { display: flex; align-items: center; gap: 12px; height: 30px; padding-top: 2px; white-space: nowrap; }
.app-icon { width: 16px; height: 16px; }
.app-icon text { fill: #e6ddff; font: bold 5px "Liberation Sans", sans-serif; text-anchor: middle; }
.caret { display: block; width: 0; height: 0; border: 3px solid transparent; border-top-color: currentColor; border-bottom: 0; }
.caret.light { color: #fff; }
.caret.wide { border-width: 5px 5px 0; }
.caret.inline { display: inline-block; vertical-align: middle; margin-left: 1px; }

.tabs { display: flex; height: 24px; }
.file { width: 43px; margin-bottom: 1px; padding-left: 27px; background: #1979ca; }
.tab { padding: 2px 0 0; border-bottom: 1px solid #b5c4dc; }
.tab.active { width: 54px; margin-left: 3px; padding-top: 1px; border: 1px solid #b5c4dc; border-bottom-color: #fff; }
.tab.window { width: 78px; }
.tab.help { width: 48px; }
.tab.internal { width: 74px; }
.rest { flex: 1; border-bottom: 1px solid #b5c4dc; }

.ribbon { display: flex; height: 91px; padding-top: 4px; border-bottom: 2px solid #a9b7ca; white-space: nowrap; }
.group { position: relative; display: flex; flex-direction: column; flex: none; padding-right: 6px; }
.group::after { content: ""; position: absolute; right: 0; top: 3px; bottom: 5px; width: 1px; background: #a9b8d0; }
.group h2 { text-align: center; color: #7b89a3; line-height: 18px; }
.edit, .find { padding-left: 5px; }
.edit { width: 96px; }
.find { width: 113px; }
.choose { width: 104px; padding-left: 3px; }
.display { width: 481px; padding-left: 5px; }
.built { width: 167px; padding-left: 3px; }
.tools { display: flex; height: 66px; }
.stack { flex-direction: column; }
.big { display: flex; flex-direction: column; align-items: center; flex: none; padding-top: 4px; line-height: 13px; text-align: center; }
.big svg { width: 32px; height: 32px; margin-bottom: 3px; }
.big > .caret { margin-top: 3px; }
.w40 { width: 40px; } .w41 { width: 41px; } .w42 { width: 42px; } .w46 { width: 46px; } .w50 { width: 51px; } .w54 { width: 54px; } .w68 { width: 68px; }
.on { background: #cde8ff; }
.off { color: #8b8b8b; }
.minor { width: 56px; }
.minor.zooms { width: 82px; padding-left: 5px; }
.small { display: flex; align-items: center; gap: 3px; width: 100%; height: 22px; padding-left: 3px; }
.small svg, .sidebar svg { width: 16px; height: 16px; }
.blue-cursor { fill: #e6f6ff; stroke: #1769ad; }
.soft-rotate { stroke: #9db8ce; }
.blue-pan { fill: #1769ad; }
.gray-rotate { stroke: #888; }
.dark-cursor { fill: #fff; stroke: #222; }
.combo { position: relative; width: 102px; height: 22px; }
.combo select { width: 100%; height: 22px; padding: 0 2px; appearance: none; border: 1px solid #a9b9cf; background: #f1f5fc; }
.combo .caret { position: absolute; right: 5px; top: 9px; }
.search { display: flex; height: 22px; }
.search input { width: 80px; height: 22px; border: 1px solid #b9c7dc; background: #f1f5fc; }
.search button { padding: 2px 3px; }
.mark { display: flex; align-items: center; gap: 3px; width: 100px; height: 22px; padding-left: 3px; border: 1px solid #99d1ff; background: #e5f3ff; }

.workspace { display: flex; flex: 1; align-items: stretch; border-top: 1px solid #dde6f2; }
.sidebar { display: flex; flex-direction: column; align-self: flex-start; width: 26px; padding-bottom: 1px; border-right: 1px solid #aaa; border-bottom: 1px solid #aaa; }
.sidebar button { display: flex; align-items: center; justify-content: center; width: 24px; height: 24px; }
.sidebar .on { border: 1px solid #99d1ff; }
.sidebar hr { width: 20px; margin: 1px 2px 5px; border: 0; border-top: 1px solid #888; }
.grip { height: 11px; border-top: 4px solid #fff; background: radial-gradient(circle, #bbb 1px, transparent 1px) 0 0 / 4px 4px repeat-x; }
.cube-line { fill: #edf5fc; stroke: #9caec8; }
.explorer { width: 301px; margin-right: 4px; }
.explorer header { display: flex; align-items: center; height: 19px; padding: 1px 4px 0; background: linear-gradient(#c9d7e6, #d9e5f2); }
.explorer header h2 { flex: 1; }
.pin { margin-right: 9px; }
.close { display: grid; place-items: center; width: 12px; height: 12px; background: #c75050; }
.subtabs { display: flex; height: 24px; padding-top: 1px; }
.subtabs button { width: 82px; border-right: 1px solid #d5d5d5; border-top: 1px solid #d5d5d5; }
.subtabs span { flex: 1; border-bottom: 1px solid #d5d5d5; }
.tree { padding-left: 7px; white-space: nowrap; }
.tree ul { position: relative; margin-left: 19px; }
.tree ul::before { content: ""; position: absolute; left: 4px; top: 0; bottom: 9px; border-left: 1px dotted #888; }
.tree .mid::before { bottom: 27px; }
.row { display: flex; align-items: center; height: 18px; }
.row svg { width: 16px; height: 16px; }
.row svg text { font: 10px "Liberation Mono", monospace; text-anchor: middle; fill: #111; stroke: #111; }
.row svg text { stroke-width: 0; font-weight: bold; }
.row > span { margin-left: 8px; }
.minus { position: relative; width: 9px; height: 9px; border: 1px solid #999; background: linear-gradient(#2e5b9b, #2e5b9b) center / 5px 1px no-repeat #f6f6f6; }
.stub { width: 6px; border-top: 1px dotted #888; }
.leaf .stub { width: 10px; margin-left: 5px; }
.faded { color: #999; }
.row .selected { margin-left: 3px; padding: 0 4px; border: 1px solid #ddd; border-radius: 3px; background: linear-gradient(#f9f9f9, #e6e6e6); }

.view { position: relative; flex: 1; min-width: 0; border-left: 2px solid #747474; border-top: 6px double #777; background: linear-gradient(#fff, #fff) padding-box, linear-gradient(#aaa, #aaa) border-box; }
.view-tab { position: absolute; left: 0; top: 0; display: flex; align-items: center; width: 116px; height: 18px; padding-left: 14px; background: #8ca5c1; white-space: nowrap; }
.view-tab b { width: 1px; height: 10px; margin: 0 5px 0 auto; background: #111; }
.view-tab .caret { margin-right: 8px; }
.plan { width: 100%; height: auto; }
.rings { fill: none; stroke: #9400ff; }
.rings use, .buildings path { vector-effect: non-scaling-stroke; stroke-width: 1px; }
#ring { vector-effect: non-scaling-stroke; }
.spokes { fill: none; stroke: #ff8000; }
.buildings { fill: none; stroke: #000080; shape-rendering: crispEdges; }
.rings, .spokes, .outer { shape-rendering: crispEdges; }
.outer { fill: none; stroke: #00f; stroke-width: 2; }
.axes { fill: none; stroke: #00f; stroke-width: 2; stroke-dasharray: 15 4 6 4; shape-rendering: crispEdges; }
.heads { fill: #00f; }
.labels text { fill: #ff8000; font: bold 13px "Liberation Serif", serif; }
.labels.axis text { fill: #00f; font: bold 12px "Liberation Mono", monospace; }
.brand text { font: bold 46px Roboto, sans-serif; }
```
